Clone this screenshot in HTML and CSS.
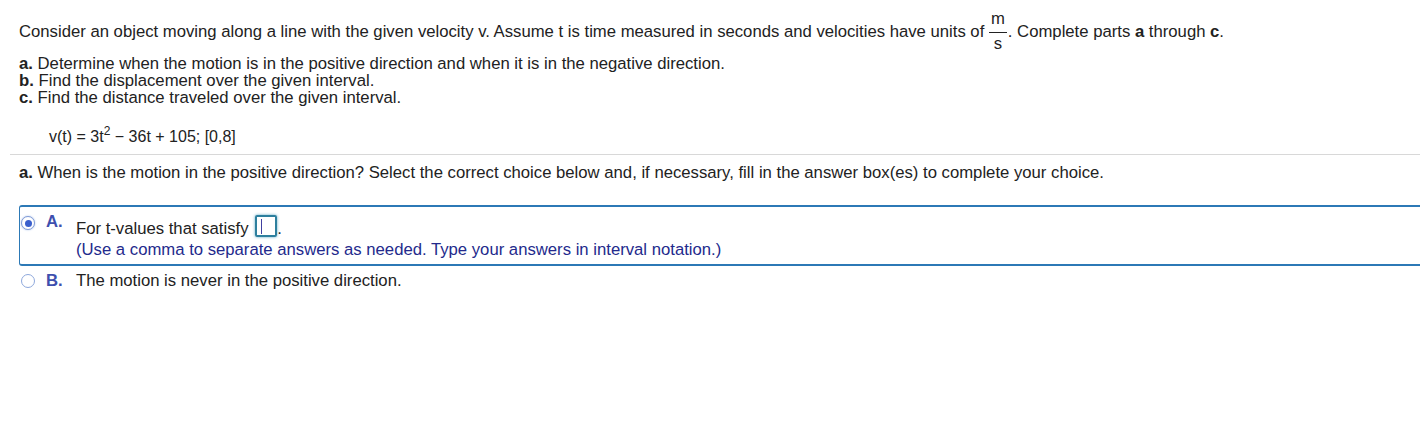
FILE: index.html
```html
<!DOCTYPE html>
<html lang="en">
<head>
    <meta charset="UTF-8">
    <title>Question</title>
    <link rel="stylesheet" href="styles.css">
</head>
<body>
    <div class="question">
        <p class="intro">Consider an object moving along a line with the given velocity v. Assume t is time measured in seconds and velocities have units of <span class="frac"><span class="num">m</span><span class="den">s</span></span>. Complete parts <b>a</b> through <b>c</b>.</p>
        <div class="parts">
            <div><b>a.</b> Determine when the motion is in the positive direction and when it is in the negative direction.</div>
            <div><b>b.</b> Find the displacement over the given interval.</div>
            <div><b>c.</b> Find the distance traveled over the given interval.</div>
        </div>
        <p class="formula">v(t) = 3t<sup>2</sup> &minus; 36t + 105; [0,8]</p>
    </div>

    <div class="answer">
        <p class="prompt"><b>a.</b> When is the motion in the positive direction? Select the correct choice below and, if necessary, fill in the answer box(es) to complete your choice.</p>

        <div class="choice selected">
            <span class="radio on"></span>
            <span class="letter">A.</span>
            <div class="choice-text">
                <div class="line">For t-values that satisfy <span class="box"><span class="caret"></span></span>.</div>
                <div class="hint">(Use a comma to separate answers as needed. Type your answers in interval notation.)</div>
            </div>
        </div>
        <div class="choice">
            <span class="radio"></span>
            <span class="letter">B.</span>
            <div class="choice-text">
                <div class="line">The motion is never in the positive direction.</div>
            </div>
        </div>
    </div>
</body>
</html>
```

FILE: styles.css
```css
/* 页面基本样式 */
body {
    margin: 0;
    padding: 0;
    font-family: "Liberation Sans", Arial, sans-serif;
    font-size: 16.7px;
    color: #222;
    background: #fff;
}

p {
    margin: 0;
}

/* 题目 */
.question {
    padding: 11px 0 0 19px;
}

.intro {
    line-height: 20px;
}

.frac {
    display: inline-flex;
    flex-direction: column;
    align-items: center;
    vertical-align: 13px;
    line-height: 15px;
    margin: 0 1px 0 0;
}

.frac .num {
    border-bottom: 1px solid #222;
    padding: 0 2px 6px;
}

.frac .den {
    padding-top: 3px;
}

.parts {
    margin-top: 4px;
    line-height: 17px;
}

.formula {
    margin: 21px 0 0 30px;
    font-size: 16px;
    line-height: 20px;
}

.formula sup {
    font-size: 12px;
    line-height: 0;
    vertical-align: 7px;
}

/* 答题区 */
.answer {
    margin: 7px 0 0 10px;
    padding: 9px 0 0 9px;
    border-top: 1px solid #d8d8d8;
}

.prompt {
    line-height: 18px;
}

.choice {
    display: flex;
    align-items: flex-start;
    padding: 5px 0 0 1px;
}

.choice.selected {
    margin-top: 23px;
    padding: 8px 0 4px 0;
    border: 2px solid #2c79b6;
    border-right: none;
    border-left-width: 1px;
    border-radius: 3px 0 0 3px;
}

.radio {
    width: 14px;
    height: 14px;
    margin: 3px 0 0 1px;
    border: 1.5px solid #8ea8dc;
    border-radius: 50%;
    box-sizing: border-box;
    display: flex;
    align-items: center;
    justify-content: center;
    background: #fff;
    flex: none;
}

.radio.on {
    margin-top: 1px;
    border-color: #7f9ad6;
    box-shadow: 0 0 2px #a8bfe8;
}

.radio.on::after {
    content: "";
    width: 7px;
    height: 7px;
    border-radius: 50%;
    background: #3a5fcc;
}

.letter {
    width: 30px;
    margin-left: 11px;
    font-weight: bold;
    color: #3e4fae;
    line-height: 20px;
    flex: none;
}

.selected .letter {
    margin-top: -3px;
}

.line {
    line-height: 20px;
}

.selected .line {
    line-height: 22px;
}

.hint {
    color: #232a8c;
    line-height: 20px;
}

.box {
    display: inline-block;
    box-sizing: border-box;
    width: 22px;
    height: 22px;
    vertical-align: -3px;
    border: 2px solid #2d7f9e;
    border-radius: 2px;
    box-shadow: 0 0 3px #5aa6c4;
    position: relative;
    margin-left: 2px;
}

.caret {
    position: absolute;
    left: 4px;
    top: 2px;
    width: 1px;
    height: 15px;
    background: #4040a0;
}
```
